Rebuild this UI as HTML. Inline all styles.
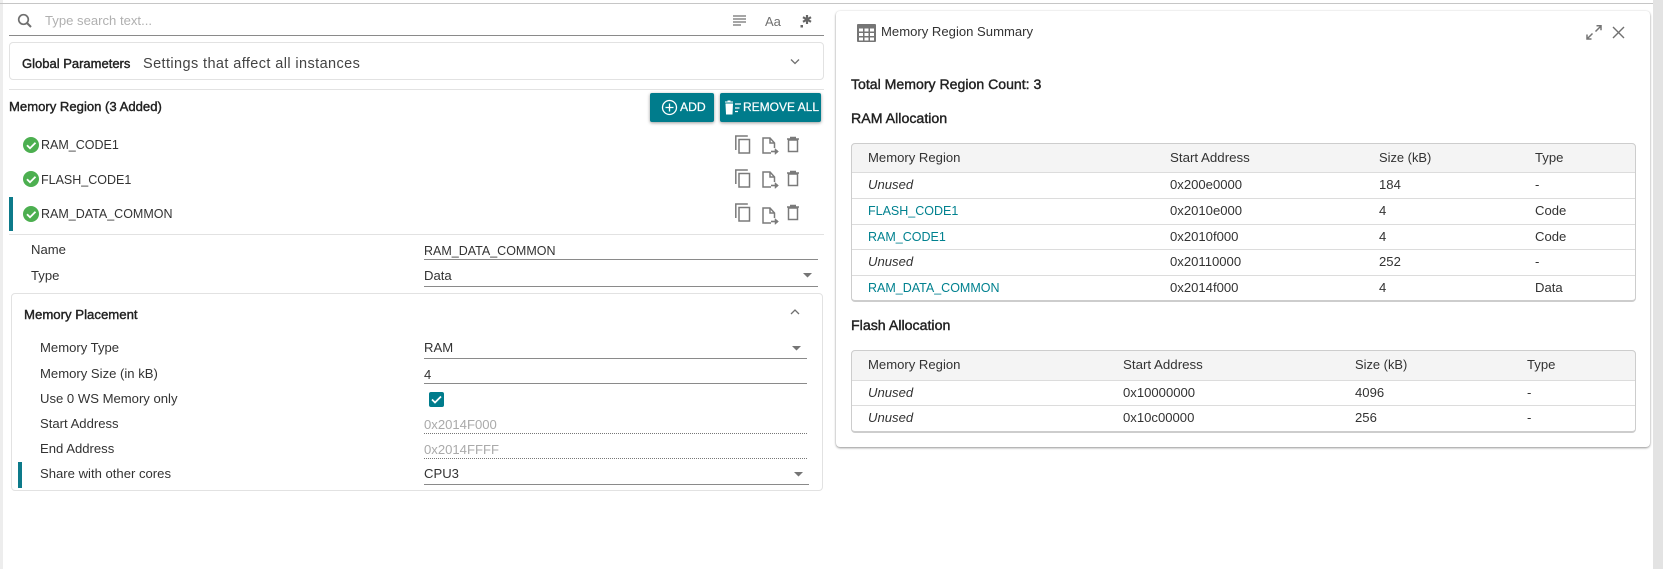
<!DOCTYPE html>
<html><head><meta charset="utf-8"><style>
html,body{margin:0;padding:0;background:#fff}
#p{position:relative;width:1663px;height:569px;overflow:hidden;background:#fff;font-family:"Liberation Sans",sans-serif;color:#333;font-size:13.1px}
.t{position:absolute;white-space:nowrap;line-height:20px;height:20px}
.b{position:absolute;box-sizing:border-box}
.m{color:#222;-webkit-text-stroke:.4px #222}
.l{color:#00818f;font-size:12.5px}
.i{font-style:italic}
.g{color:#aaa}
.n{font-size:12.5px}
.h{font-size:13.3px}
svg{position:absolute;left:0;top:0}
</style></head><body><div id="p">
<div class="b" style="left:0;top:0;width:3px;height:569px;background:#ededed"></div>
<div class="b" style="left:1653px;top:0;width:10px;height:569px;background:#e3e3e3"></div>
<div class="b" style="left:0;top:3px;width:1653px;height:1px;background:#c6c6c6"></div>
<div class="b" style="left:9px;top:35px;width:815px;height:1px;background:#8a8a8a"></div>
<div class="b" style="left:9px;top:42px;width:815px;height:38px;border:1px solid #e2e2e2;border-radius:4px"></div>
<div class="b" style="left:9px;top:89px;width:815px;height:1px;background:#e2e2e2"></div>
<div class="b" style="left:9px;top:234px;width:815px;height:1px;background:#e2e2e2"></div>
<div class="b" style="left:9px;top:197px;width:4px;height:34px;background:#0d7a8a"></div>
<div class="b" style="left:650px;top:93px;width:64px;height:29px;background:#007c8c;border-radius:2px;box-shadow:0 1px 3px rgba(0,0,0,.4)"></div>
<div class="b" style="left:720px;top:93px;width:101px;height:29px;background:#007c8c;border-radius:2px;box-shadow:0 1px 3px rgba(0,0,0,.4)"></div>
<div class="b" style="left:11px;top:293px;width:812px;height:198px;border:1px solid #e2e2e2;border-radius:4px"></div>
<div class="b" style="left:18px;top:462px;width:4px;height:26px;background:#0d7a8a"></div>
<div class="b" style="left:424px;top:259px;width:394px;height:1px;background:#8a8a8a"></div>
<div class="b" style="left:424px;top:286px;width:394px;height:1px;background:#8a8a8a"></div>
<div class="b" style="left:424px;top:358px;width:383px;height:1px;background:#8a8a8a"></div>
<div class="b" style="left:424px;top:383px;width:383px;height:1px;background:#8a8a8a"></div>
<div class="b" style="left:424px;top:433px;width:383px;height:0;border-top:1px dotted #777"></div>
<div class="b" style="left:424px;top:458px;width:383px;height:0;border-top:1px dotted #777"></div>
<div class="b" style="left:424px;top:484px;width:385px;height:1px;background:#8a8a8a"></div>
<div class="b" style="left:429px;top:392px;width:15px;height:15px;background:#007c8c;border-radius:2px"></div>
<div class="b" style="left:836px;top:11px;width:814px;height:436px;background:#fff;border-radius:4px;box-shadow:0 1px 2px rgba(0,0,0,.4),0 0 2px rgba(0,0,0,.08)"></div>
<div class="b" style="left:851px;top:143px;width:785px;height:29px;background:#f4f4f4;border-radius:4px 4px 0 0"></div>
<div class="b" style="left:851px;top:143px;width:785px;height:159px;border:1px solid #cdcdcd;border-bottom-width:2px;border-radius:4px"></div>
<div class="b" style="left:852px;top:172px;width:783px;height:1px;background:#dcdcdc"></div>
<div class="b" style="left:852px;top:198px;width:783px;height:1px;background:#dcdcdc"></div>
<div class="b" style="left:852px;top:224px;width:783px;height:1px;background:#dcdcdc"></div>
<div class="b" style="left:852px;top:249px;width:783px;height:1px;background:#dcdcdc"></div>
<div class="b" style="left:852px;top:275px;width:783px;height:1px;background:#dcdcdc"></div>
<div class="b" style="left:851px;top:350px;width:785px;height:30px;background:#f4f4f4;border-radius:4px 4px 0 0"></div>
<div class="b" style="left:851px;top:350px;width:785px;height:83px;border:1px solid #cdcdcd;border-bottom-width:2px;border-radius:4px"></div>
<div class="b" style="left:852px;top:380px;width:783px;height:1px;background:#dcdcdc"></div>
<div class="b" style="left:852px;top:405px;width:783px;height:1px;background:#dcdcdc"></div>

<svg width="1663" height="569" viewBox="0 0 1663 569" fill="none">
<circle cx="23.5" cy="19.5" r="4.8" stroke="#707070" stroke-width="1.7"/><path d="M27 23l4 4" stroke="#707070" stroke-width="2"/>
<path d="M733 16h13M733 19h13M733 22h13M733 25h8" stroke="#707070" stroke-width="1.2"/>
<path d="M807 15v9M803 17.200l8 4.600M811 17.200l-8 4.600" stroke="#666" stroke-width="2.200"/><rect x="800.500" y="25" width="2.500" height="2.500" fill="#666"/>
<path d="M791 59.500l4 4 4-4" stroke="#707070" stroke-width="1.300"/>
<path d="M791 314l4-4 4 4" stroke="#707070" stroke-width="1.300"/>
<path d="M803 273h9l-4.500 4.500zM792 346h9l-4.500 4.500zM794 472h9l-4.500 4.500z" fill="#757575"/>
<circle cx="31" cy="145" r="8" fill="#4caf50"/><path d="M27 145.200l3 3 5.500-5.500" stroke="#fff" stroke-width="1.800"/>
<circle cx="31" cy="179" r="8" fill="#4caf50"/><path d="M27 179.200l3 3 5.500-5.500" stroke="#fff" stroke-width="1.800"/>
<circle cx="31" cy="214" r="8" fill="#4caf50"/><path d="M27 214.200l3 3 5.500-5.500" stroke="#fff" stroke-width="1.800"/>
<circle cx="669.500" cy="107.500" r="7" stroke="#fff" stroke-width="1.300"/><path d="M669.500 103.500v8M665.500 107.500h8" stroke="#fff" stroke-width="1.300"/>
<path d="M725 102h8M726 104h6.500l-.5 10h-5.500z" fill="#fff" stroke="#fff"/><rect x="727.500" y="100.500" width="3" height="1.500" fill="#fff"/>
<path d="M735 104h6M735 108h4.500M735 111.500h3" stroke="#fff" stroke-width="1.300"/>
<g stroke="#7a7a7a" stroke-width="1.500">
<path d="M735.800 150v-14h12"/><rect x="739" y="139.500" width="10.500" height="13.500"/>
<path d="M774.500 148v-5l-4.500-5h-7v15h8"/><path d="M770 138v5h4.500"/><path d="M771 151.500h5.500" stroke-width="1.600"/><path d="M775 148.500l3.500 3-3.500 3z" fill="#7a7a7a" stroke-width=".5"/>
<path d="M787 139h12M790 137.500h6"/><rect x="788.500" y="140" width="9" height="11.500"/>
<path d="M735.800 184v-14h12"/><rect x="739" y="173.500" width="10.500" height="13.500"/>
<path d="M774.500 182v-5l-4.500-5h-7v15h8"/><path d="M770 172v5h4.500"/><path d="M771 185.500h5.500" stroke-width="1.600"/><path d="M775 182.500l3.500 3-3.500 3z" fill="#7a7a7a" stroke-width=".5"/>
<path d="M787 173h12M790 171.500h6"/><rect x="788.500" y="174" width="9" height="11.500"/>
<path d="M735.800 218v-14h12"/><rect x="739" y="207.500" width="10.500" height="13.500"/>
<path d="M774.500 218v-5l-4.500-5h-7v15h8"/><path d="M770 208v5h4.500"/><path d="M771 221.500h5.500" stroke-width="1.600"/><path d="M775 218.500l3.500 3-3.500 3z" fill="#7a7a7a" stroke-width=".5"/>
<path d="M787 207h12M790 205.500h6"/><rect x="788.500" y="208" width="9" height="11.500"/>
</g>
<path d="M432 399.500l3 3 6-6" stroke="#fff" stroke-width="1.700"/>
<rect x="857" y="24" width="19" height="18" rx="1" fill="#757575"/>
<path d="M859 28.500h4v3h-4zM864.500 28.500h4v3h-4zM870 28.500h4v3h-4zM859 33h4v3h-4zM864.500 33h4v3h-4zM870 33h4v3h-4zM859 37.500h4v3h-4zM864.500 37.500h4v3h-4zM870 37.500h4v3h-4z" fill="#fff"/>
<path d="M1601 26l-5.500 5.500M1596.500 25.800h4.500v4.500M1587 39l5.500-5.500M1587 34.500v4.500h4.500" stroke="#757575" stroke-width="1.500"/>
<path d="M1613 27l11 11M1624 27l-11 11" stroke="#707070" stroke-width="1.400"/>
</svg>

<div class="t g" style="left:45px;top:11px;color:#b0b0b0">Type search text...</div>
<div class="t" style="left:765px;top:12px;font-size:13px;color:#707070">Aa</div>
<div class="t m" style="left:22px;top:54px;font-size:13px">Global Parameters</div>
<div class="t" style="left:143px;top:54px;font-size:14.5px;letter-spacing:.4px;color:#444">Settings that affect all instances</div>
<div class="t m" style="left:9px;top:97px;font-size:13.1px">Memory Region (3 Added)</div>
<div class="t" style="left:680px;top:97px;font-size:12.2px;color:#fff;-webkit-text-stroke:.2px #fff">ADD</div>
<div class="t" style="left:743px;top:97px;font-size:12px;color:#fff;-webkit-text-stroke:.2px #fff">REMOVE ALL</div>
<div class="t n" style="left:41px;top:135px">RAM_CODE1</div>
<div class="t n" style="left:41px;top:170px">FLASH_CODE1</div>
<div class="t n" style="left:41px;top:204px">RAM_DATA_COMMON</div>
<div class="t" style="left:31px;top:240px">Name</div>
<div class="t" style="left:31px;top:266px">Type</div>
<div class="t n" style="left:424px;top:241px">RAM_DATA_COMMON</div>
<div class="t" style="left:424px;top:266px">Data</div>
<div class="t m" style="left:24px;top:305px;font-size:13.2px">Memory Placement</div>
<div class="t" style="left:40px;top:338px">Memory Type</div>
<div class="t" style="left:40px;top:364px">Memory Size (in kB)</div>
<div class="t" style="left:40px;top:389px">Use 0 WS Memory only</div>
<div class="t" style="left:40px;top:414px">Start Address</div>
<div class="t" style="left:40px;top:439px">End Address</div>
<div class="t" style="left:40px;top:464px">Share with other cores</div>
<div class="t" style="left:424px;top:338px">RAM</div>
<div class="t" style="left:424px;top:365px">4</div>
<div class="t g" style="left:424px;top:415px">0x2014F000</div>
<div class="t g" style="left:424px;top:440px">0x2014FFFF</div>
<div class="t" style="left:424px;top:464px">CPU3</div>
<div class="t" style="left:881px;top:22px">Memory Region Summary</div>
<div class="t m" style="left:851px;top:74px;font-size:14.1px">Total Memory Region Count: 3</div>
<div class="t m" style="left:851px;top:109px;font-size:14.2px">RAM Allocation</div>
<div class="t m" style="left:851px;top:316px;font-size:14.2px">Flash Allocation</div>

<div class="t" style="left:868px;top:148px">Memory Region</div><div class="t h" style="left:1170px;top:148px">Start Address</div><div class="t" style="left:1379px;top:148px;font-size:12.9px">Size (kB)</div><div class="t" style="left:1535px;top:148px">Type</div>
<div class="t i" style="left:868px;top:175px">Unused</div><div class="t" style="left:1170px;top:175px">0x200e0000</div><div class="t" style="left:1379px;top:175px">184</div><div class="t" style="left:1535px;top:175px">-</div>
<div class="t l" style="left:868px;top:201px">FLASH_CODE1</div><div class="t" style="left:1170px;top:201px">0x2010e000</div><div class="t" style="left:1379px;top:201px">4</div><div class="t" style="left:1535px;top:201px">Code</div>
<div class="t l" style="left:868px;top:227px">RAM_CODE1</div><div class="t" style="left:1170px;top:227px">0x2010f000</div><div class="t" style="left:1379px;top:227px">4</div><div class="t" style="left:1535px;top:227px">Code</div>
<div class="t i" style="left:868px;top:252px">Unused</div><div class="t" style="left:1170px;top:252px">0x20110000</div><div class="t" style="left:1379px;top:252px">252</div><div class="t" style="left:1535px;top:252px">-</div>
<div class="t l" style="left:868px;top:278px">RAM_DATA_COMMON</div><div class="t" style="left:1170px;top:278px">0x2014f000</div><div class="t" style="left:1379px;top:278px">4</div><div class="t" style="left:1535px;top:278px">Data</div>

<div class="t" style="left:868px;top:355px">Memory Region</div><div class="t h" style="left:1123px;top:355px">Start Address</div><div class="t" style="left:1355px;top:355px;font-size:12.9px">Size (kB)</div><div class="t" style="left:1527px;top:355px">Type</div>
<div class="t i" style="left:868px;top:383px">Unused</div><div class="t" style="left:1123px;top:383px">0x10000000</div><div class="t" style="left:1355px;top:383px">4096</div><div class="t" style="left:1527px;top:383px">-</div>
<div class="t i" style="left:868px;top:408px">Unused</div><div class="t" style="left:1123px;top:408px">0x10c00000</div><div class="t" style="left:1355px;top:408px">256</div><div class="t" style="left:1527px;top:408px">-</div>
</div></body></html>
